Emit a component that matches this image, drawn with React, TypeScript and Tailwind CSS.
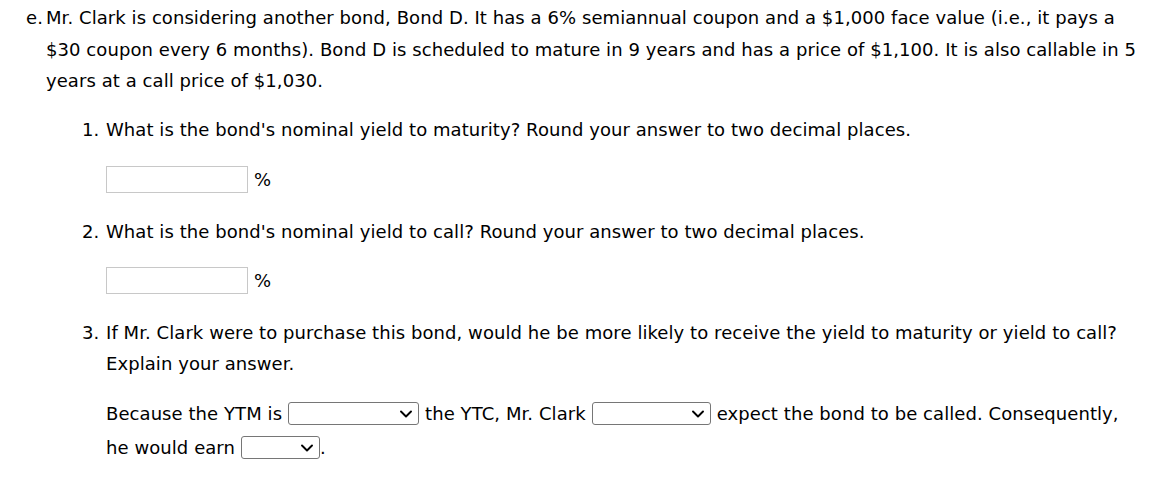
import { ChevronDown } from "lucide-react";

function Blank({ w }: { w: string }) {
  return (
    <input
      type="text"
      className={`${w} h-[27px] border border-[#c8c8c8] bg-white outline-none`}
    />
  );
}

function Dropdown({ w }: { w: string }) {
  return (
    <span
      className={`${w} flex h-[23px] shrink-0 items-center justify-end rounded-[3px] border border-[#767676] bg-white pr-[2px]`}
    >
      <ChevronDown className="h-[20px] w-[20px] text-black" strokeWidth={2.3} />
    </span>
  );
}

export default function App() {
  return (
    <div
      className="w-[1160px] bg-white pl-[26px] pr-[18px] pt-[2px] text-[18px] leading-[31.5px] tracking-[0.07px] text-black"
      style={{ fontFamily: '"DejaVu Sans", Verdana, sans-serif' }}
    >
      <div className="flex">
        <span className="w-[20px] shrink-0">e.</span>
        <div className="flex-1">
          <p>
            Mr. Clark is considering another bond, Bond D. It has a 6% semiannual coupon and a $1,000 face value
            (i.e., it pays a $30 coupon every 6 months). Bond D is scheduled to mature in 9 years and has a price of
            $1,100. It is also callable in 5 years at a call price of $1,030.
          </p>

          <ol className="mt-[17px] pl-[36px]">
            <li className="flex">
              <span className="w-[24px] shrink-0">1.</span>
              <div>
                <p>What is the bond's nominal yield to maturity? Round your answer to two decimal places.</p>
                <div className="mt-[19px] mb-[20px] flex items-center gap-[6px]">
                  <Blank w="w-[142px]" />
                  <span>%</span>
                </div>
              </div>
            </li>
            <li className="flex">
              <span className="w-[24px] shrink-0">2.</span>
              <div>
                <p>What is the bond's nominal yield to call? Round your answer to two decimal places.</p>
                <div className="mt-[18px] mb-[20px] flex items-center gap-[6px]">
                  <Blank w="w-[142px]" />
                  <span>%</span>
                </div>
              </div>
            </li>
            <li className="flex">
              <span className="w-[24px] shrink-0">3.</span>
              <div>
                <p>
                  If Mr. Clark were to purchase this bond, would he be more likely to receive the yield to maturity or
                  yield to call? Explain your answer.
                </p>
                <div className="mt-[17px] leading-[34px]">
                  <div className="flex items-center gap-[6px] whitespace-nowrap">
                    <span>Because the YTM is</span>
                    <Dropdown w="w-[131px]" />
                    <span>the YTC, Mr. Clark</span>
                    <Dropdown w="w-[119px]" />
                    <span>expect the bond to be called. Consequently,</span>
                  </div>
                  <div className="flex items-center gap-[6px] whitespace-nowrap">
                    <span>he would earn</span>
                    <span className="flex items-center">
                      <Dropdown w="w-[79px]" />
                      <span>.</span>
                    </span>
                  </div>
                </div>
              </div>
            </li>
          </ol>
        </div>
      </div>
    </div>
  );
}
